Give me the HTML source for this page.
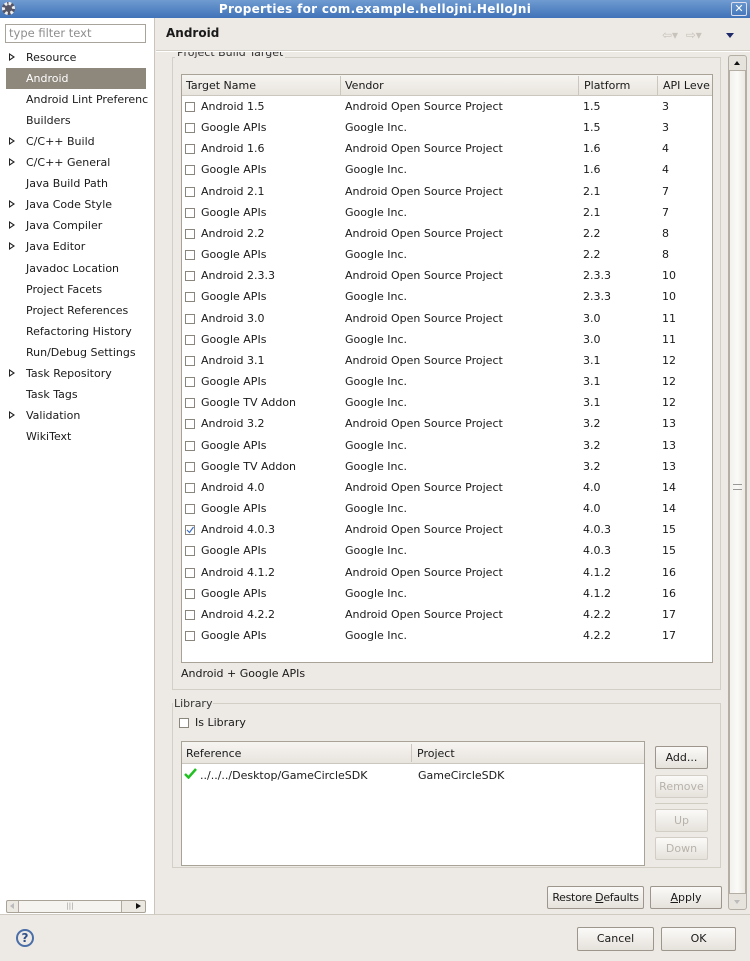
<!DOCTYPE html>
<html><head><meta charset="utf-8"><style>
*{box-sizing:border-box;margin:0;padding:0}
body{width:750px;height:961px;background:#edeae5;font-family:"DejaVu Sans","Liberation Sans",sans-serif;font-size:11px;color:#1a1a1a;position:relative;overflow:hidden}
.a{position:absolute}
.title{left:0;top:0;width:750px;height:18px;background:linear-gradient(#6f9bd0,#3f72b8);color:#fff;font-weight:bold;font-size:12px;text-align:center;line-height:18px;letter-spacing:.3px}
.left{left:0;top:18px;width:155px;height:897px;background:#fff;border-right:1px solid #c9c4bc}
.tree div{position:absolute;left:26px;height:21px;line-height:21px;white-space:nowrap}
.tri{position:absolute;left:9px;width:0;height:0;border-left:6px solid #222;border-top:4.5px solid transparent;border-bottom:4.5px solid transparent}
.tri:after{content:"";position:absolute;left:-5px;top:-2.5px;border-left:3.5px solid #fff;border-top:2.5px solid transparent;border-bottom:2.5px solid transparent}
.cb{position:absolute;width:10px;height:10px;border:1px solid #8a857d;background:#fff}
.btn{position:absolute;height:23px;border:1px solid #9c968c;border-radius:2px;background:linear-gradient(#fbfaf8,#e6e2dc);text-align:center;line-height:21px;font-size:11px;white-space:nowrap}
.dis{color:#b7b2aa;border-color:#d2cdc5}
</style></head><body>
<div class="a title">Properties for com.example.hellojni.HelloJni</div>
<div class="a" style="left:2px;top:2px;width:13px;height:13px;border-radius:50%;border:3px dotted #eee;background:#556"></div>
<div class="a" style="left:731px;top:2px;width:16px;height:14px;border:1px solid #dde;border-radius:2px;color:#fff;font-weight:bold;font-size:11px;line-height:12px;text-align:center">✕</div>

<div class="a left"></div>
<div class="a" style="left:5px;top:24px;width:141px;height:19px;border:1px solid #a9a49b;background:#fff;color:#8e8e8e;font-size:11.5px;line-height:17px;padding-left:3px">type filter text</div>
<div class="a" style="left:6px;top:68px;width:140px;height:21px;background:#8e877c"></div>
<div class="tree">
<div style="top:47px">Resource</div><span class="tri" style="top:53px"></span>
<div style="top:68px;color:#fff">Android</div>
<div style="top:89px">Android Lint Preferenc</div>
<div style="top:110px">Builders</div>
<div style="top:131px">C/C++ Build</div><span class="tri" style="top:137px"></span>
<div style="top:152px">C/C++ General</div><span class="tri" style="top:158px"></span>
<div style="top:173px">Java Build Path</div>
<div style="top:194px">Java Code Style</div><span class="tri" style="top:200px"></span>
<div style="top:215px">Java Compiler</div><span class="tri" style="top:221px"></span>
<div style="top:236px">Java Editor</div><span class="tri" style="top:242px"></span>
<div style="top:258px">Javadoc Location</div>
<div style="top:279px">Project Facets</div>
<div style="top:300px">Project References</div>
<div style="top:321px">Refactoring History</div>
<div style="top:342px">Run/Debug Settings</div>
<div style="top:363px">Task Repository</div><span class="tri" style="top:369px"></span>
<div style="top:384px">Task Tags</div>
<div style="top:405px">Validation</div><span class="tri" style="top:411px"></span>
<div style="top:426px">WikiText</div>
</div>
<div class="a" style="left:6px;top:900px;width:140px;height:13px;border:1px solid #a9a296;border-radius:2px;background:#ece8e2"></div>
<div class="a" style="left:18px;top:901px;width:104px;height:11px;background:#f6f4f1;border-left:1px solid #b0aa9f;border-right:1px solid #b0aa9f;text-align:center;font-size:7px;color:#999;line-height:11px">|||</div>
<div class="a" style="left:136px;top:903px;border-left:5px solid #111;border-top:3.5px solid transparent;border-bottom:3.5px solid transparent"></div>
<div class="a" style="left:10px;top:903px;border-right:4px solid #bbb;border-top:3px solid transparent;border-bottom:3px solid transparent"></div>

<!-- group 1 -->
<div class="a" style="left:172px;top:57px;width:549px;height:633px;border:1px solid #d3cec6"></div>
<div class="a" style="left:175px;top:46px;background:#edeae5;padding:0 2px;color:#333">Project Build Target</div>
<div class="a" style="left:156px;top:18px;width:594px;height:34px;background:#edeae5"></div>
<div class="a" style="left:166px;top:26px;font-weight:bold;font-size:12px">Android</div>
<div class="a" style="left:662px;top:28px;color:#c8c3bb;font-size:12px">⇦▾ &nbsp;⇨▾</div>
<div class="a" style="left:726px;top:33px;border-top:5px solid #1f2a6b;border-left:4px solid transparent;border-right:4px solid transparent"></div>
<div class="a" style="left:156px;top:50px;width:594px;height:1px;background:#d3cec6"></div>
<div class="a" style="left:156px;top:51px;width:594px;height:1px;background:#fff"></div>

<div class="a" style="left:181px;top:74px;width:532px;height:589px;border:1px solid #a9a296;background:#fff">
<div class="a" style="left:0;top:0;width:530px;height:21px;background:linear-gradient(#f7f5f2,#e8e4de);border-bottom:1px solid #cbc6be"></div>
<div class="a" style="left:158px;top:1px;width:1px;height:19px;background:#cbc6be"></div>
<div class="a" style="left:396px;top:1px;width:1px;height:19px;background:#cbc6be"></div>
<div class="a" style="left:475px;top:1px;width:1px;height:19px;background:#cbc6be"></div>
<div class="a" style="left:4px;top:4px">Target Name</div>
<div class="a" style="left:163px;top:4px">Vendor</div>
<div class="a" style="left:402px;top:4px">Platform</div>
<div class="a" style="left:481px;top:4px;white-space:nowrap">API Leve</div>
</div>
<div class="a" id="rows" style="left:182px;top:96px"></div>
<div class="a" style="left:181px;top:667px">Android + Google APIs</div>

<!-- library -->
<div class="a" style="left:172px;top:703px;width:549px;height:165px;border:1px solid #d3cec6"></div>
<div class="a" style="left:173px;top:697px;background:#edeae5;padding:0 1px;color:#333">Library</div>
<div class="cb" style="left:179px;top:718px"></div>
<div class="a" style="left:195px;top:716px">Is Library</div>
<div class="a" style="left:181px;top:741px;width:464px;height:125px;border:1px solid #a9a296;background:#fff"></div>
<div class="a" style="left:182px;top:742px;width:462px;height:22px;background:linear-gradient(#f7f5f2,#e8e4de);border-bottom:1px solid #cbc6be"></div>
<div class="a" style="left:411px;top:744px;width:1px;height:18px;background:#cbc6be"></div>
<div class="a" style="left:186px;top:747px">Reference</div>
<div class="a" style="left:417px;top:747px">Project</div>
<svg class="a" style="left:184px;top:768px" width="13" height="11"><path d="M1 6 L4.5 9.5 L12 1" stroke="#22c022" stroke-width="2.5" fill="none"/></svg>
<div class="a" style="left:200px;top:769px">../../../Desktop/GameCircleSDK</div>
<div class="a" style="left:418px;top:769px">GameCircleSDK</div>
<div class="btn" style="left:655px;top:746px;width:53px">Add...</div>
<div class="btn dis" style="left:655px;top:775px;width:53px">Remove</div>
<div class="a" style="left:655px;top:803px;width:53px;height:1px;background:#d0cbc3"></div>
<div class="btn dis" style="left:655px;top:809px;width:53px">Up</div>
<div class="btn dis" style="left:655px;top:837px;width:53px">Down</div>
<div class="btn" style="left:547px;top:886px;width:97px;letter-spacing:-.3px">Restore <u>D</u>efaults</div>
<div class="btn" style="left:650px;top:886px;width:72px"><u>A</u>pply</div>

<!-- v scrollbar -->
<div class="a" style="left:728px;top:55px;width:19px;height:855px;border:1px solid #b4aea4;border-radius:3px;background:#e6e2dc"></div>
<div class="a" style="left:729px;top:70px;width:17px;height:824px;background:linear-gradient(90deg,#f3f1ed,#fbfaf8,#ece8e2);border:1px solid #b4aea4"></div>
<div class="a" style="left:734px;top:61px;border-bottom:4px solid #111;border-left:3px solid transparent;border-right:3px solid transparent"></div>
<div class="a" style="left:734px;top:900px;border-top:4px solid #bbb;border-left:3px solid transparent;border-right:3px solid transparent"></div>
<div class="a" style="left:733px;top:484px;width:9px;height:6px;border-top:1px solid #999;border-bottom:1px solid #999"></div>

<div class="a" style="left:0;top:914px;width:750px;height:1px;background:#cfcac2"></div>
<div class="a" style="left:16px;top:929px;width:18px;height:18px;border:2px solid #4a6ea8;border-radius:50%;color:#2f4f8a;font-weight:bold;font-size:12px;line-height:14px;text-align:center">?</div>
<div class="btn" style="left:577px;top:927px;width:77px;height:24px">Cancel</div>
<div class="btn" style="left:661px;top:927px;width:75px;height:24px">OK</div>

<script>
var d=[["Android 1.5","Android Open Source Project","1.5","3"],["Google APIs","Google Inc.","1.5","3"],["Android 1.6","Android Open Source Project","1.6","4"],["Google APIs","Google Inc.","1.6","4"],["Android 2.1","Android Open Source Project","2.1","7"],["Google APIs","Google Inc.","2.1","7"],["Android 2.2","Android Open Source Project","2.2","8"],["Google APIs","Google Inc.","2.2","8"],["Android 2.3.3","Android Open Source Project","2.3.3","10"],["Google APIs","Google Inc.","2.3.3","10"],["Android 3.0","Android Open Source Project","3.0","11"],["Google APIs","Google Inc.","3.0","11"],["Android 3.1","Android Open Source Project","3.1","12"],["Google APIs","Google Inc.","3.1","12"],["Google TV Addon","Google Inc.","3.1","12"],["Android 3.2","Android Open Source Project","3.2","13"],["Google APIs","Google Inc.","3.2","13"],["Google TV Addon","Google Inc.","3.2","13"],["Android 4.0","Android Open Source Project","4.0","14"],["Google APIs","Google Inc.","4.0","14"],["Android 4.0.3","Android Open Source Project","4.0.3","15"],["Google APIs","Google Inc.","4.0.3","15"],["Android 4.1.2","Android Open Source Project","4.1.2","16"],["Google APIs","Google Inc.","4.1.2","16"],["Android 4.2.2","Android Open Source Project","4.2.2","17"],["Google APIs","Google Inc.","4.2.2","17"]];
var h="";d.forEach(function(r,i){var t=Math.round(i*21.16);
h+='<div class="cb" style="left:3px;top:'+(t+6)+'px">'+(i==20?'<svg style="position:absolute;left:0;top:0" width="8" height="8"><path d="M1 4 L3.5 6.5 L7.5 1" stroke="#3b6fc4" stroke-width="1.2" fill="none"/></svg>':'')+'</div>';
h+='<span class="a" style="left:19px;top:'+(t+4)+'px;white-space:nowrap">'+r[0]+'</span><span class="a" style="left:163px;top:'+(t+4)+'px;white-space:nowrap">'+r[1]+'</span><span class="a" style="left:401px;top:'+(t+4)+'px">'+r[2]+'</span><span class="a" style="left:480px;top:'+(t+4)+'px">'+r[3]+'</span>';});
document.getElementById("rows").innerHTML=h;
</script>
</body></html>
